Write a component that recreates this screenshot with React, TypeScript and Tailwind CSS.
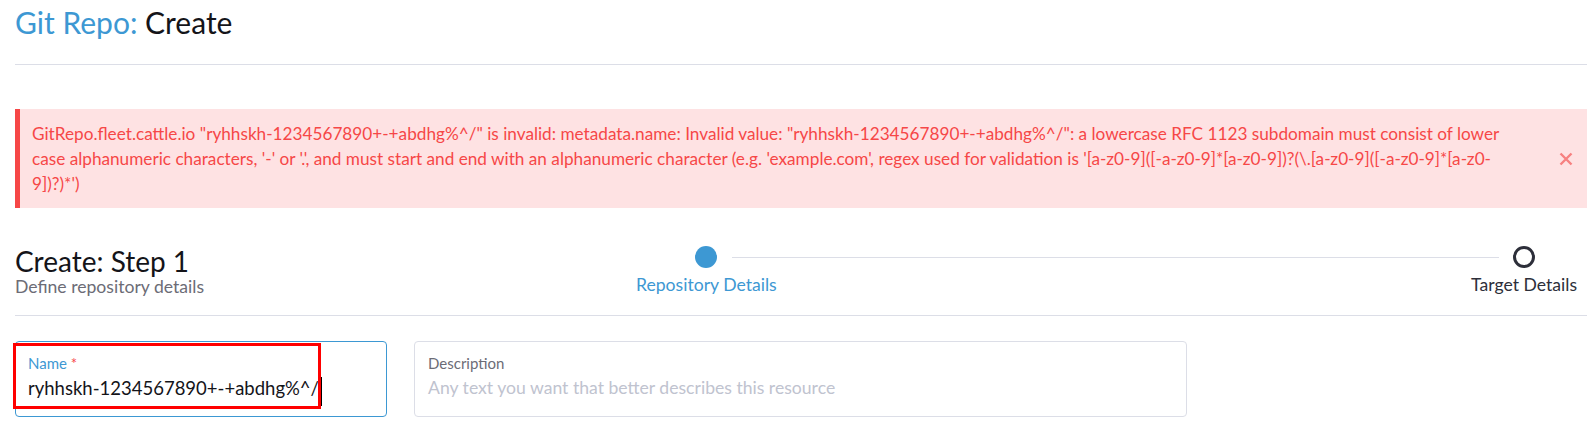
import React from "react";

export default function App() {
  return (
    <div className="min-h-screen bg-white pl-[15px] pr-[9px] font-['Lato','Noto_Sans',sans-serif] text-[#141419]">
      {/* page header */}
      <div className="border-b border-[#dcdee7] pt-[4px] pb-[24px]">
        <h1 className="text-[30px] leading-[36px]">
          <span className="text-[#3d98d3]">Git Repo:</span> Create
        </h1>
      </div>

      {/* error banner */}
      <div className="mt-[44px] flex h-[99px] items-center border-l-[5px] border-[#f64747] bg-[#fee2e3] pl-[12px] pr-[14px]">
        <p className="flex-1 text-[17.2px] leading-[25px] text-[#f64747]">
          GitRepo.fleet.cattle.io "ryhhskh-1234567890+-+abdhg%^/" is invalid: metadata.name: Invalid value:
          "ryhhskh-1234567890+-+abdhg%^/": a lowercase RFC 1123 subdomain must consist of lower
          <br />
          case alphanumeric characters, '-' or '.', and must start and end with an alphanumeric character (e.g.
          'example.com', regex used for validation is '[a-z0-9]([-a-z0-9]*[a-z0-9])?(\.[a-z0-9]([-a-z0-9]*[a-z0-
          <br />
          9])?)*')
        </p>
        <button className="ml-[16px] text-[#f78181]">
          <svg width="14" height="14" viewBox="0 0 14 14" fill="none" stroke="currentColor" strokeWidth="2.4">
            <path d="M1.5 1.5L12.5 12.5M12.5 1.5L1.5 12.5" />
          </svg>
        </button>
      </div>

      {/* wizard header */}
      <div className="mt-[39px] flex border-b border-[#dcdee7] pb-[16px]">
        <div className="w-[621px] shrink-0">
          <h2 className="text-[28px] leading-[28px]">Create: Step 1</h2>
          <p className="text-[17.6px] leading-[24px] text-[#6c6c76]">Define repository details</p>
        </div>
        <div className="-mt-[1px] flex flex-1 pr-[10px]">
          <div className="flex flex-col items-center">
            <div className="h-[22px] w-[22px] rounded-full bg-[#3d98d3]" />
            <span className="mt-[5px] text-[17.6px] leading-[24px] text-[#3d98d3]">Repository Details</span>
          </div>
          <div className="-ml-[45px] -mr-[28px] mt-[11px] h-px flex-1 bg-[#dcdee7]" />
          <div className="flex flex-col items-center">
            <div className="h-[22px] w-[22px] rounded-full border-[3px] border-[#2d2f3a]" />
            <span className="mt-[5px] text-[17.6px] leading-[24px] text-[#2d2f3a]">Target Details</span>
          </div>
        </div>
      </div>

      {/* fields */}
      <div className="mt-[25px] flex gap-[27px]">
        <div className="relative h-[76px] w-[372px] rounded-[4px] border border-[#3d98d3] px-[12px] pt-[12px]">
          <div className="text-[15px] leading-[18px] text-[#3d98d3]">
            Name <span className="text-[#f64747]">*</span>
          </div>
          <div className="mt-[4px] flex h-[24px] items-start text-[18.5px] leading-[24px] text-[#141419]">
            <span>ryhhskh-1234567890+-+abdhg%^/</span>
            <span className="ml-[2px] mt-[1px] h-[29px] w-px bg-black" />
          </div>
          <div className="pointer-events-none absolute -left-[3px] top-px h-[66px] w-[308px] border-[3px] border-[#ff0000]" />
        </div>
        <div className="h-[76px] w-[773px] rounded-[4px] border border-[#dcdee7] px-[13px] pt-[12px]">
          <div className="text-[15px] leading-[18px] text-[#6c6c76]">Description</div>
          <div className="mt-[4px] text-[17.6px] leading-[24px] text-[#c0c3cf]">
            Any text you want that better describes this resource
          </div>
        </div>
      </div>
    </div>
  );
}
